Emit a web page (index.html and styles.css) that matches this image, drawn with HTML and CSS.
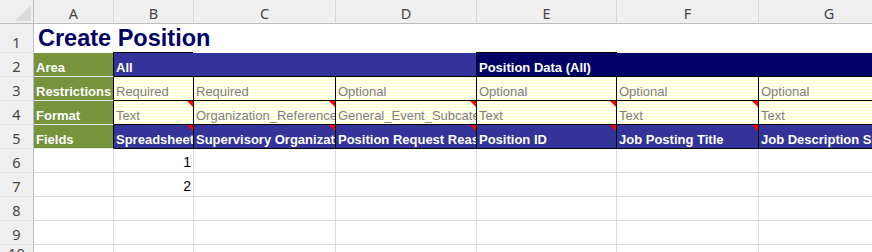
FILE: index.html
```html
<!DOCTYPE html>
<html lang="en">
<head>
    <meta charset="UTF-8">
    <title>Create Position</title>
    <link rel="stylesheet" href="styles.css">
</head>
<body>
    <div class="sheet">
        <!-- column headers -->
        <div class="corner"></div>
        <div class="col">A</div>
        <div class="col">B</div>
        <div class="col">C</div>
        <div class="col">D</div>
        <div class="col">E</div>
        <div class="col">F</div>
        <div class="col">G</div>

        <!-- row 1 -->
        <div class="rh">1</div>
        <div class="title">Create Position</div>

        <!-- row 2 -->
        <div class="rh">2</div>
        <div class="cell lab">Area</div>
        <div class="cell blue span3">All</div>
        <div class="cell navy span3">Position Data (All)</div>

        <!-- row 3 -->
        <div class="rh">3</div>
        <div class="cell lab">Restrictions</div>
        <div class="cell inp">Required</div>
        <div class="cell inp">Required</div>
        <div class="cell inp">Optional</div>
        <div class="cell inp">Optional</div>
        <div class="cell inp">Optional</div>
        <div class="cell inp">Optional</div>

        <!-- row 4 -->
        <div class="rh">4</div>
        <div class="cell lab">Format</div>
        <div class="cell inp note">Text</div>
        <div class="cell inp note">Organization_Reference_ID</div>
        <div class="cell inp note">General_Event_Subcategory_ID</div>
        <div class="cell inp note">Text</div>
        <div class="cell inp note">Text</div>
        <div class="cell inp">Text</div>

        <!-- row 5 -->
        <div class="rh">5</div>
        <div class="cell lab">Fields</div>
        <div class="cell fld note">Spreadsheet Key</div>
        <div class="cell fld note">Supervisory Organization</div>
        <div class="cell fld note">Position Request Reason</div>
        <div class="cell fld note">Position ID</div>
        <div class="cell fld note">Job Posting Title</div>
        <div class="cell fld">Job Description Summary</div>

        <!-- row 6 -->
        <div class="rh">6</div>
        <div class="cell"></div>
        <div class="cell num">1</div>
        <div class="cell"></div>
        <div class="cell"></div>
        <div class="cell"></div>
        <div class="cell"></div>
        <div class="cell"></div>

        <!-- row 7 -->
        <div class="rh">7</div>
        <div class="cell"></div>
        <div class="cell num">2</div>
        <div class="cell"></div>
        <div class="cell"></div>
        <div class="cell"></div>
        <div class="cell"></div>
        <div class="cell"></div>

        <!-- row 8 -->
        <div class="rh">8</div>
        <div class="cell"></div>
        <div class="cell"></div>
        <div class="cell"></div>
        <div class="cell"></div>
        <div class="cell"></div>
        <div class="cell"></div>
        <div class="cell"></div>

        <!-- row 9 -->
        <div class="rh">9</div>
        <div class="cell"></div>
        <div class="cell"></div>
        <div class="cell"></div>
        <div class="cell"></div>
        <div class="cell"></div>
        <div class="cell"></div>
        <div class="cell"></div>

        <!-- row 10 -->
        <div class="rh">10</div>
        <div class="cell"></div>
        <div class="cell"></div>
        <div class="cell"></div>
        <div class="cell"></div>
        <div class="cell"></div>
        <div class="cell"></div>
        <div class="cell"></div>
    </div>
</body>
</html>
```

FILE: styles.css
```css
* {
    margin: 0;
    padding: 0;
    box-sizing: border-box;
}

body {
    background: #fff;
    font-family: 'Liberation Sans', Arial, sans-serif;
}

.sheet {
    display: grid;
    grid-template-columns: 34px 80px 80px 142px 141px 140px 142px 141px;
    grid-template-rows: 24px 29px repeat(8, 24px);
    width: 872px;
    height: 252px;
    overflow: hidden;
}

/* Headers */
.corner,
.col,
.rh {
    position: relative;
    display: flex;
    align-items: flex-end;
    justify-content: center;
    background: #efefef;
    color: #444;
    font-family: 'Noto Sans', sans-serif;
    font-size: 14.5px;
    line-height: 17px;
    padding-bottom: 1px;
}

.corner {
    border-right: 1px solid #bdbdbd;
    border-bottom: 1px solid #bdbdbd;
}

.corner::after {
    content: '';
    position: absolute;
    right: 2px;
    bottom: 2px;
    border-left: 16px solid transparent;
    border-bottom: 16px solid #dcdcdc;
}

.col {
    border-right: 1px solid #d8d8d8;
    border-bottom: 1px solid #bdbdbd;
}

.rh {
    border-right: 1px solid #bdbdbd;
    border-bottom: 1px solid #e3e3e3;
}

/* Title row */
.title {
    grid-column: span 7;
    display: flex;
    align-items: flex-end;
    padding: 0 4px 1px;
    color: #000066;
    font-size: 23.5px;
    font-weight: bold;
    line-height: 27px;
    white-space: nowrap;
    background:
        linear-gradient(#000, #000) 79px 100% / 80px 1px no-repeat,
        linear-gradient(#000, #000) 442px 100% / 141px 1px no-repeat,
        #fff;
}

/* Cells */
.cell {
    position: relative;
    display: flex;
    align-items: flex-end;
    padding: 0 2px 1px;
    border-right: 1px solid #dadada;
    border-bottom: 1px solid #dadada;
    font-size: 13px;
    line-height: 15px;
    white-space: nowrap;
    overflow: hidden;
}

.span3 {
    grid-column: span 3;
}

.lab {
    background: #77933c;
    color: #fff;
    font-weight: bold;
    border-right-color: #000;
    border-bottom-color: #e4e4e4;
}

.blue,
.navy,
.fld {
    color: #fff;
    font-weight: bold;
    border-right-color: #000;
    border-bottom-color: #000;
}

.blue,
.fld {
    background: #333399;
}

.navy {
    background: #000066;
}

.inp {
    color: #808080;
    background: repeating-linear-gradient(#ffffc8 0 1px, #fffff6 1px 3px);
    border-right-color: #000;
    border-bottom-color: #000;
}

.num {
    justify-content: flex-end;
    font-size: 14px;
    line-height: 16px;
    padding-bottom: 2px;
    color: #000;
}

/* Comment marker */
.note::after {
    content: '';
    position: absolute;
    top: 0;
    right: 0;
    border-top: 6px solid #ff0000;
    border-left: 6px solid transparent;
}
```
